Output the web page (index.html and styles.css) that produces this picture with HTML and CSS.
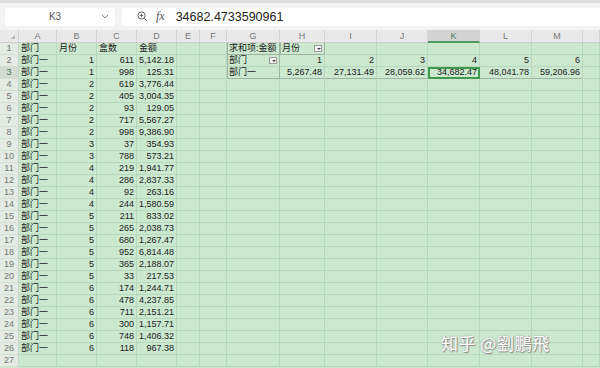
FILE: index.html
```html
<!DOCTYPE html>
<html lang="zh-CN">
<head>
    <meta charset="UTF-8">
    <title>数据透视表</title>
    <link rel="stylesheet" href="styles.css">
</head>
<body>
    <div class="toolbar">
        <div class="namebox">
            <span class="cellref">K3</span>
            <svg class="chevron" width="8" height="5" viewBox="0 0 8 5"><path d="M1 1l3 3 3-3" fill="none" stroke="#8a8a8a" stroke-width="1"/></svg>
        </div>
        <div class="formula">
            <svg class="zoomicon" width="11" height="11" viewBox="0 0 11 11">
                <circle cx="4.5" cy="4.5" r="3.6" fill="none" stroke="#666" stroke-width="1"/>
                <path d="M7.2 7.2l3 3M2.8 4.5h3.4M4.5 2.8v3.4" stroke="#666" stroke-width="1"/>
            </svg>
            <span class="fx">fx</span>
            <span class="value">34682.4733590961</span>
        </div>
    </div>

    <div class="sheet" id="sheet"></div>

    <div class="watermark">知乎 @劉鵬飛</div>

    <script>
        const cols = ["A", "B", "C", "D", "E", "F", "G", "H", "I", "J", "K", "L", "M", ""];
        const rows = [
            [1, 611, "5,142.18"], [1, 998, "125.31"], [2, 619, "3,776.44"], [2, 405, "3,004.35"],
            [2, 93, "129.05"], [2, 717, "5,567.27"], [2, 998, "9,386.90"], [3, 37, "354.93"],
            [3, 788, "573.21"], [4, 219, "1,941.77"], [4, 286, "2,837.33"], [4, 92, "263.16"],
            [4, 244, "1,580.59"], [5, 211, "833.02"], [5, 265, "2,038.73"], [5, 680, "1,267.47"],
            [5, 952, "6,814.48"], [5, 365, "2,188.07"], [5, 33, "217.53"], [6, 174, "1,244.71"],
            [6, 478, "4,237.85"], [6, 711, "2,151.21"], [6, 300, "1,157.71"], [6, 748, "1,406.32"],
            [6, 118, "967.38"]
        ];
        const pivot = ["5,267.48", "27,131.49", "28,059.62", "34,682.47", "48,041.78", "59,206.96"];

        const sheet = document.getElementById("sheet");

        function add(cls, text) {
            const el = document.createElement("div");
            el.className = cls;
            if (text !== undefined) el.textContent = text;
            sheet.appendChild(el);
            return el;
        }

        // column headers
        add("corner");
        cols.forEach(c => add("colhead" + (c === "K" ? " active" : ""), c));

        // cell contents keyed by "row,col"
        const cells = {};
        cells["1,0"] = ["部门", "txt"];
        cells["1,1"] = ["月份", "txt"];
        cells["1,2"] = ["盒数", "txt"];
        cells["1,3"] = ["金额", "txt"];
        cells["1,6"] = ["求和项:金额", "txt pv pv-top"];
        cells["1,7"] = ["月份", "txt pv pv-top drop"];
        cells["2,6"] = ["部门", "txt pv drop"];
        cells["3,6"] = ["部门一", "txt pv pv-bottom"];
        rows.forEach((r, i) => {
            cells[(i + 2) + ",0"] = ["部门一", "txt"];
            cells[(i + 2) + ",1"] = [r[0], "num"];
            cells[(i + 2) + ",2"] = [r[1], "num"];
            cells[(i + 2) + ",3"] = [r[2], "num"];
        });
        pivot.forEach((v, i) => {
            cells["2," + (i + 7)] = [i + 1, "num"];
            cells["3," + (i + 7)] = [v, "num pv-bottom" + (i === 3 ? " selected" : "")];
        });

        for (let r = 1; r <= 27; r++) {
            add("rowhead" + (r === 3 ? " active" : ""), r);
            cols.forEach((c, ci) => {
                const data = cells[r + "," + ci];
                const el = add("cell" + (data ? " " + data[1] : ""), data ? data[0] : "");
                if (data && data[1].includes("drop")) {
                    const btn = document.createElement("span");
                    btn.className = "dropbtn";
                    el.appendChild(btn);
                }
            });
        }
    </script>
</body>
</html>
```

FILE: styles.css
```css
body {
    margin: 0;
    width: 600px;
    height: 368px;
    overflow: hidden;
    position: relative;
    background: #cce8cf;
    font-family: "Liberation Sans", "Noto Sans CJK SC", sans-serif;
    color: #222;
}
.toolbar {
    height: 30px;
    box-sizing: border-box;
    background: #f3f3f3;
    border-top: 3px solid #dedede;
    display: flex;
    align-items: center;
    padding: 0 0 0 5px;
    gap: 7px;
}
.namebox {
    width: 110px;
    height: 18px;
    background: #fff;
    border-radius: 3px;
    display: flex;
    align-items: center;
}
.cellref {
    flex: 1;
    text-align: center;
    font-size: 10px;
    color: #555;
    padding-left: 4px;
}
.chevron {
    margin-right: 6px;
}
.formula {
    flex: 1;
    height: 18px;
    background: #fff;
    border-radius: 3px 0 0 3px;
    display: flex;
    align-items: center;
}
.zoomicon {
    margin-left: 15px;
}
.fx {
    font-family: "Liberation Serif", serif;
    font-style: italic;
    font-size: 12px;
    color: #555;
    margin-left: 8px;
}
.value {
    font-size: 12.5px;
    color: #222;
    margin-left: 11px;
}
.sheet {
    display: grid;
    grid-template-columns: 19px 38px 40px 40px 40px 23px 27px 53px 45px 52px 51px 52px 52px 51px 17px;
    grid-template-rows: 13px;
    grid-auto-rows: 12px;
    font-size: 9px;
}
.corner,
.colhead {
    background: #e9e9e9;
    border-right: 1px solid #d4d4d4;
    border-bottom: 1px solid #cfcfcf;
    box-sizing: border-box;
    color: #777;
    text-align: center;
    line-height: 12px;
}
.corner {
    position: relative;
}
.corner::after {
    content: "";
    position: absolute;
    right: 3px;
    bottom: 3px;
    border-left: 4px solid transparent;
    border-bottom: 4px solid #b4b4b4;
}
.colhead.active {
    background: #d3d3d3;
    border-bottom: 2px solid #4f9a5f;
    color: #4c7a55;
}
.rowhead {
    background: #e4ebe4;
    border-right: 1px solid #c6d6c6;
    border-bottom: 1px solid #d3dfd3;
    box-sizing: border-box;
    color: #777;
    text-align: center;
    line-height: 11px;
}
.rowhead.active {
    background: #d3dcd3;
    color: #4c7a55;
}
.cell {
    border-right: 1px solid #b9d7bc;
    border-bottom: 1px solid #b9d7bc;
    box-sizing: border-box;
    line-height: 11px;
    white-space: nowrap;
    position: relative;
}
.txt {
    padding-left: 2px;
}
.num {
    text-align: right;
    padding-right: 2px;
}
.pv {
    border-left: 1px solid #9fb3a1;
    border-right: 1px solid #9fb3a1;
    padding-left: 1px;
}
.pv-top {
    border-bottom: 1px solid #9fb3a1;
}
.pv-bottom {
    border-bottom: 1px solid #9fb3a1;
}
.selected {
    outline: 2px solid #3f9a4f;
    outline-offset: -2px;
    z-index: 1;
}
.dropbtn {
    position: absolute;
    right: 2px;
    top: 2px;
    width: 8px;
    height: 7px;
    background: #f4f4f4;
    border: 1px solid #9a9a9a;
    box-sizing: border-box;
}
.dropbtn::after {
    content: "";
    position: absolute;
    left: 1.5px;
    top: 2px;
    border-left: 2px solid transparent;
    border-right: 2px solid transparent;
    border-top: 2px solid #444;
}
.watermark {
    position: absolute;
    left: 441px;
    top: 330px;
    font-family: "Noto Sans CJK SC", sans-serif;
    font-size: 17px;
    color: #fff;
    text-shadow: 1px 1px 1px #8a8a8a, 0 0 2px #9a9a9a;
    letter-spacing: 0.5px;
}
```
